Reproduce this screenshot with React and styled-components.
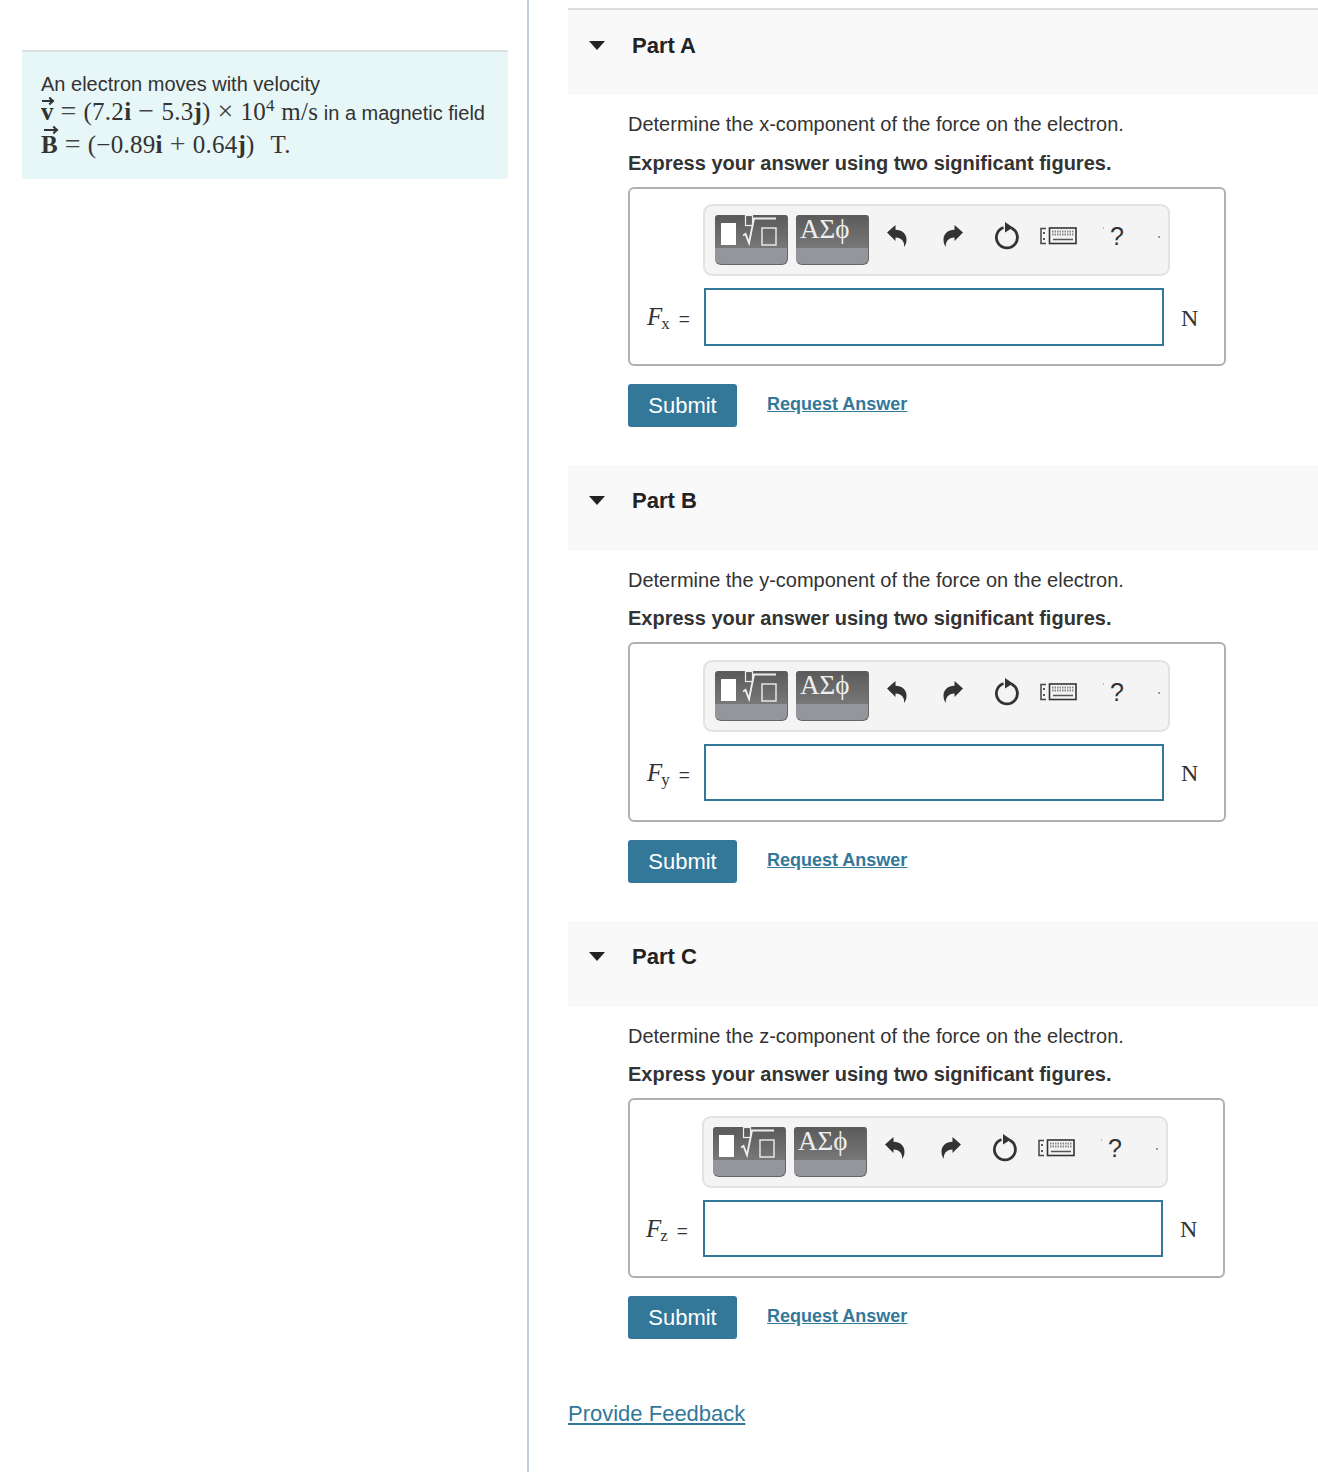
import styled, { createGlobalStyle } from "styled-components";

const parts = [
  { name: "Part A", axis: "x" },
  { name: "Part B", axis: "y" },
  { name: "Part C", axis: "z", shifted: true },
];

const App = () => {
  return (
    <>
      <GlobalStyle />
      <Page>
        <LeftColumn>
          <Intro>
            <IntroLine>An electron moves with velocity</IntroLine>
            <IntroLine $height={32}>
              <Vec>v</Vec>
              <MathText>
                <Op>=</Op>(7.2<b>i</b>
                <Op>−</Op>5.3<b>j</b>)<Op>×</Op>10<Sup>4</Sup> m/s
              </MathText>{" "}
              in a magnetic field
            </IntroLine>
            <IntroLine $height={34}>
              <Vec $wide>B</Vec>
              <MathText>
                <Op>=</Op>(−0.89<b>i</b>
                <Op>+</Op>0.64<b>j</b>) &nbsp;<Tesla>T.</Tesla>
              </MathText>
            </IntroLine>
          </Intro>
        </LeftColumn>
        <RightColumn>
          {parts.map((part, i) => (
            <Part key={part.name} {...part} first={i === 0} />
          ))}
          <FeedbackLink href="#">Provide Feedback</FeedbackLink>
        </RightColumn>
      </Page>
    </>
  );
};

const Part = ({ name, axis, shifted, first }) => (
  <PartSection $first={first}>
    <PartHeader $first={first}>
      <Caret />
      <PartTitle>{name}</PartTitle>
    </PartHeader>
    <PartBody>
      <Question>Determine the {axis}-component of the force on the electron.</Question>
      <Instruction $first={first}>Express your answer using two significant figures.</Instruction>
      <AnswerBox $shifted={shifted} $first={first}>
        <Toolbar $shifted={shifted}>
          <TemplateButton>
            <TemplateIcon />
          </TemplateButton>
          <TemplateButton>
            <Greek>ΑΣϕ</Greek>
          </TemplateButton>
          <IconSlot $width={56}>
            <ArrowIcon />
          </IconSlot>
          <IconSlot $width={56}>
            <ArrowIcon $flip />
          </IconSlot>
          <IconSlot $width={52}>
            <ResetIcon />
          </IconSlot>
          <IconSlot $width={50}>
            <KeyboardIcon />
          </IconSlot>
          <IconSlot $width={68}>
            <Help>?</Help>
          </IconSlot>
          <TinyDot />
        </Toolbar>
        <AnswerRow>
          <AnswerLabel>
            <Force>F</Force>
            <Sub>{axis}</Sub>
            <Equals>=</Equals>
          </AnswerLabel>
          <AnswerInput $first={first} />
          <Unit>N</Unit>
        </AnswerRow>
      </AnswerBox>
      <Actions>
        <SubmitButton>Submit</SubmitButton>
        <RequestLink href="#">Request Answer</RequestLink>
      </Actions>
    </PartBody>
  </PartSection>
);

const TemplateIcon = () => (
  <svg width="62" height="32" viewBox="0 0 62 32" fill="none">
    <rect x="0" y="9" width="15" height="22" fill="#fff" />
    <rect x="24.500" y="1.500" width="7" height="10" stroke="#eee" strokeWidth="1.200" />
    <path d="M22 21.500l2.500-1.500 3.500 9L33 4.500h22" stroke="#eee" strokeWidth="1.900" />
    <rect x="41" y="14" width="14" height="17" stroke="#eee" strokeWidth="1.400" />
  </svg>
);

const ArrowIcon = styled(({ className }) => (
  <svg className={className} width="22" height="26" viewBox="0 0 22 26">
    <path
      d="M1 9.500 9.500 2v4.800c6.500.2 11 3.800 11 10 0 3-1 5.500-2.300 7.200 .4-5.500-2.500-9.300-8.700-9.500V18Z"
      fill="#333"
    />
  </svg>
))`
  transform: ${(p) => (p.$flip ? "scaleX(-1)" : "none")};
`;

const ResetIcon = () => (
  <svg width="28" height="30" viewBox="0 0 28 30" fill="none">
    <path d="M18.500 7a10.500 10.500 0 1 1-8 -.500" stroke="#333" strokeWidth="2.800" />
    <path d="M12 1 20 6.500l-8 5Z" fill="#333" />
  </svg>
);

const KeyboardIcon = () => (
  <svg width="37" height="20" viewBox="0 0 37 20" fill="none">
    <path d="M6 2.500H1v15h5" stroke="#444" strokeWidth="1.500" />
    <rect x="3" y="6" width="2" height="2" fill="#555" />
    <rect x="3" y="12" width="2" height="2" fill="#555" />
    <rect x="9.500" y="2" width="26.500" height="15.500" stroke="#333" strokeWidth="1.600" />
    <path d="M12 5.500h22M12 8.500h22" stroke="#888" strokeWidth="1.800" strokeDasharray="1.500 1" />
    <path d="M13 13.500h20" stroke="#555" strokeWidth="1.500" />
  </svg>
);

const GlobalStyle = createGlobalStyle`
  body {
    margin: 0;
    background: #fff;
    color: #333;
    font-family: "Liberation Sans", Arial, sans-serif;
  }
`;

const Page = styled.div`
  display: flex;
  width: 1318px;
  height: 1472px;
  overflow: hidden;
`;

const LeftColumn = styled.aside`
  box-sizing: border-box;
  flex: 0 0 529px;
  padding: 50px 19px 0 22px;
  border-right: 2px solid #c3cedd;
`;

const Intro = styled.div`
  height: 129px;
  box-sizing: border-box;
  padding: 20px 0 0 19px;
  background: #e7f6f6;
  border-top: 2px solid #dde1e1;
  font-size: 20px;
`;

const IntroLine = styled.div`
  height: ${(p) => p.$height || 24}px;
  line-height: ${(p) => p.$height || 24}px;
  white-space: pre-wrap;
`;

const MathText = styled.span`
  font-family: "Liberation Serif", serif;
  font-size: 25px;
  letter-spacing: 0.25px;
`;

const Op = styled.span`
  margin: 0 7px;
  font-size: 28px;
  line-height: 0;
  color: #444;
`;

const Tesla = styled.span`
  margin-left: 3px;
`;

const Sup = styled.sup`
  font-size: 17px;
  line-height: 0;
`;

const Vec = styled.span`
  position: relative;
  display: inline-block;
  font-family: "Liberation Serif", serif;
  font-size: 25px;
  line-height: 1;
  font-weight: 700;

  &::before {
    content: "";
    position: absolute;
    top: ${(p) => (p.$wide ? -3 : 1)}px;
    left: ${(p) => (p.$wide ? 3 : 1)}px;
    width: ${(p) => (p.$wide ? 12 : 10)}px;
    border-top: 2px solid #333;
  }

  &::after {
    content: "";
    position: absolute;
    top: ${(p) => (p.$wide ? -5 : -1)}px;
    left: ${(p) => (p.$wide ? 10 : 6)}px;
    width: 4px;
    height: 4px;
    border-top: 2px solid #333;
    border-right: 2px solid #333;
    transform: rotate(45deg);
  }
`;

const RightColumn = styled.main`
  flex: 1;
  padding: 8px 0 0 39px;
`;

const PartSection = styled.section`
  height: ${(p) => (p.$first ? 457 : 456)}px;
`;

const PartHeader = styled.div`
  box-sizing: border-box;
  height: ${(p) => (p.$first ? 87 : 86)}px;
  display: flex;
  align-items: flex-start;
  padding-top: 22px;
  background: #f9f9f9;
  border-top: ${(p) => (p.$first ? "2px solid #ddd" : "none")};
`;

const Caret = styled.span`
  width: 0;
  height: 0;
  margin: 9px 0 0 21px;
  border-left: 8.500px solid transparent;
  border-right: 8.500px solid transparent;
  border-top: 9px solid #222;
`;

const PartTitle = styled.h2`
  margin: 0 0 0 27px;
  font-size: 22px;
  line-height: 28px;
  font-weight: 700;
  color: #222;
`;

const PartBody = styled.div`
  padding-left: 60px;
`;

const Question = styled.p`
  margin: 17px 0 0;
  font-size: 20px;
  line-height: 24px;
`;

const Instruction = styled.p`
  margin: ${(p) => (p.$first ? 15 : 14)}px 0 0;
  font-size: 20px;
  line-height: 24px;
  font-weight: 700;
`;

const AnswerBox = styled.div`
  box-sizing: border-box;
  width: ${(p) => (p.$shifted ? 597 : 598)}px;
  height: ${(p) => (p.$first ? 179 : 180)}px;
  margin-top: 12px;
  padding: ${(p) => (p.$first ? 15 : 16)}px 0 0 ${(p) => (p.$shifted ? 72 : 73)}px;
  border: 2px solid #b0b0b0;
  border-radius: 6px;
`;

const Toolbar = styled.div`
  box-sizing: border-box;
  width: ${(p) => (p.$shifted ? 466 : 467)}px;
  height: 72px;
  display: flex;
  align-items: flex-start;
  padding: 9px 0 0 ${(p) => (p.$shifted ? 9 : 10)}px;
  background: #f4f4f4;
  border: 2px solid #e2e2e2;
  border-radius: 9px;
`;

const TemplateButton = styled.div`
  flex: 0 0 73px;
  height: 50px;
  margin-right: 8px;
  display: flex;
  padding: 0 0 0 6px;
  box-sizing: border-box;
  background: linear-gradient(#5a5a5a, #787878 68%, #95959c 68%);
  border-radius: 3px 3px 6px 6px;
  border-bottom: 1px solid #666;
  border-right: 1px solid #666;

  &:nth-child(2) {
    margin-right: 0;
  }

  svg {
    margin-top: -1px;
  }
`;

const Greek = styled.span`
  margin-left: -2px;
  font-family: "Liberation Serif", serif;
  font-size: 27px;
  line-height: 28px;
  color: #eee;
`;

const IconSlot = styled.div`
  flex: 0 0 ${(p) => p.$width}px;
  height: 30px;
  display: flex;
  justify-content: center;
  align-items: center;
  margin-top: 6px;
`;

const Help = styled.span`
  position: relative;
  font-size: 25px;
  color: #333;

  &::before {
    content: "";
    position: absolute;
    top: 5px;
    left: -7px;
    width: 1px;
    height: 2px;
    background: #bbb;
  }
`;

const TinyDot = styled.span`
  width: 2px;
  height: 2px;
  margin: 21px 0 0 7px;
  background: #999;
`;

const AnswerRow = styled.div`
  display: flex;
  align-items: center;
  margin: 12px 0 0 -56px;
`;

const AnswerLabel = styled.div`
  box-sizing: border-box;
  width: 57px;
  font-family: "Liberation Serif", serif;
  white-space: nowrap;
`;

const Force = styled.i`
  font-size: 25px;
`;

const Sub = styled.sub`
  margin-left: -1px;
  font-size: 17px;
  line-height: 0;
`;

const Equals = styled.span`
  margin-left: 9px;
  font-family: "Liberation Sans", sans-serif;
  font-size: 19px;
`;

const AnswerInput = styled.input.attrs({ type: "text" })`
  box-sizing: border-box;
  width: 460px;
  height: ${(p) => (p.$first ? 58 : 57)}px;
  border: 2px solid #337899;
  background: #fff;
  outline: none;
`;

const Unit = styled.span`
  margin: 2px 0 0 17px;
  font-family: "Liberation Serif", serif;
  font-size: 24px;
`;

const Actions = styled.div`
  display: flex;
  align-items: center;
  gap: 30px;
  margin-top: 18px;
`;

const SubmitButton = styled.button`
  width: 109px;
  height: 43px;
  padding: 0;
  color: #fff;
  background: #337899;
  border: none;
  border-radius: 3px;
  font: 22px "Liberation Sans", Arial, sans-serif;
`;

const RequestLink = styled.a`
  margin-top: -3px;
  color: #337899;
  font-size: 18px;
  font-weight: 700;
  text-decoration: underline;
`;

const FeedbackLink = styled.a`
  display: inline-block;
  margin-top: 24px;
  color: #337899;
  font-size: 22px;
  text-decoration: underline;
`;

export default App;
